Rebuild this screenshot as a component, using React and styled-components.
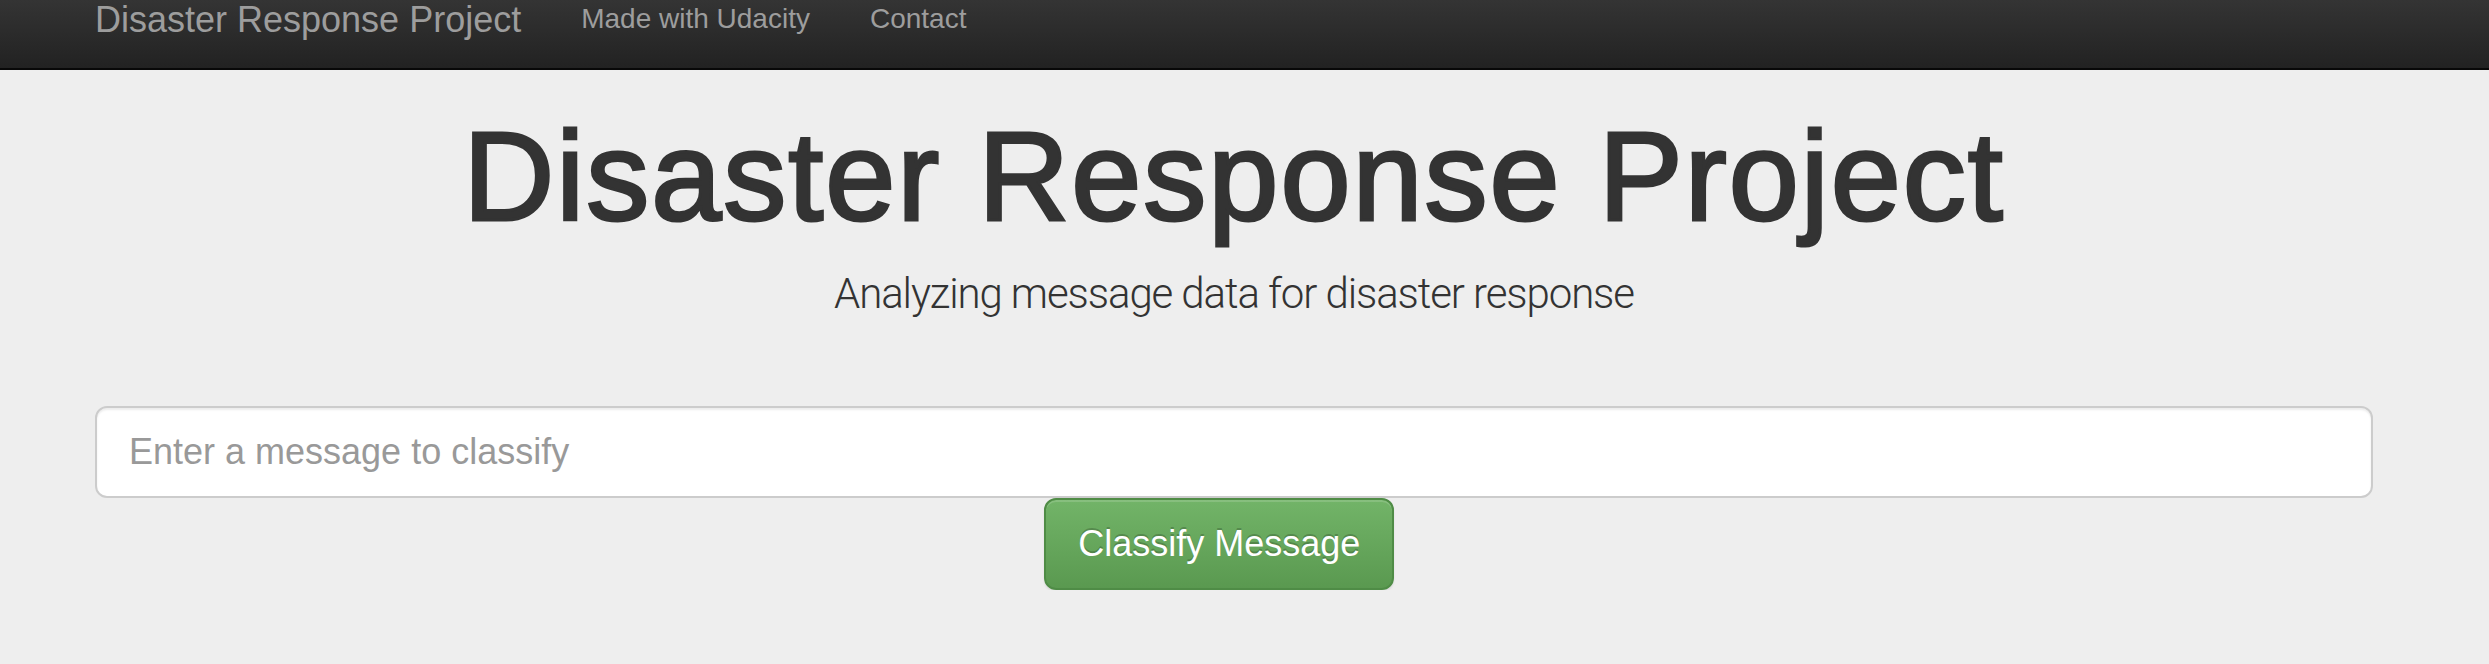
import React from "react";
import styled, { createGlobalStyle } from "styled-components";

const GlobalStyle = createGlobalStyle`
  html, body { margin: 0; padding: 0; }
  body {
    background: #eeeeee;
    font-family: "Liberation Sans", Arial, sans-serif;
    color: #333333;
  }
  * { box-sizing: border-box; }
`;

const Navbar = styled.nav`
  height: 70px;
  background: linear-gradient(to bottom, #343434 0%, #222222 100%);
  border-bottom: 2px solid #080808;
  display: flex;
  align-items: flex-start;
  padding-left: 65px;
`;

const Brand = styled.a`
  display: block;
  padding: 0 30px;
  font-size: 36px;
  line-height: 40px;
  color: #9d9d9d;
  text-decoration: none;
`;

const NavList = styled.ul`
  display: flex;
  list-style: none;
  margin: 0;
  padding: 0;
`;

const NavLink = styled.a`
  display: block;
  padding: 0 30px;
  font-size: 28px;
  line-height: 37px;
  color: #9d9d9d;
  text-decoration: none;
`;

const Container = styled.main`
  margin: 0 116px 0 95px;
`;

const Hero = styled.header`
  text-align: center;
  padding-top: 38px;
`;

const Title = styled.h1`
  margin: 0;
  font-family: "Liberation Sans", Arial, sans-serif;
  font-weight: 400;
  font-size: 126px;
  line-height: 1.1;
  letter-spacing: 2px;
  color: #333333;
  -webkit-text-stroke: 3px #333333;
`;

const Subtitle = styled.p`
  margin: 18px 0 0;
  font-family: Roboto, "Liberation Sans", sans-serif;
  font-weight: 300;
  font-size: 42px;
  line-height: 1.4;
  letter-spacing: -1.1px;
  color: #333333;
`;

const Form = styled.form`
  margin-top: 83px;
`;

const MessageInput = styled.input`
  display: block;
  width: 100%;
  height: 92px;
  padding: 20px 32px;
  font-family: "Liberation Sans", Arial, sans-serif;
  font-size: 36px;
  color: #555555;
  background: #ffffff;
  border: 2px solid #cccccc;
  border-radius: 12px;
  box-shadow: inset 0 2px 2px rgba(0, 0, 0, 0.075);
  outline: none;
  &::placeholder { color: #999999; }
`;

const ButtonRow = styled.div`
  margin-left: 41.6667%;
`;

const ClassifyButton = styled.button`
  display: inline-block;
  height: 92px;
  padding: 0 32px;
  font-family: "Liberation Sans", Arial, sans-serif;
  font-size: 36px;
  line-height: 48px;
  color: #ffffff;
  background: linear-gradient(to bottom, #72b468 0%, #5a9950 100%);
  border: 2px solid #4f8c46;
  border-radius: 12px;
  text-shadow: 0 -2px 0 rgba(0, 0, 0, 0.2);
  box-shadow: inset 0 2px 0 rgba(255, 255, 255, 0.15), 0 2px 2px rgba(0, 0, 0, 0.075);
  cursor: pointer;
`;

export default function App() {
  return (
    <>
      <GlobalStyle />
      <Navbar>
        <Brand href="#">Disaster Response Project</Brand>
        <NavList>
          <li><NavLink href="#">Made with Udacity</NavLink></li>
          <li><NavLink href="#">Contact</NavLink></li>
        </NavList>
      </Navbar>
      <Container>
        <Hero>
          <Title>Disaster Response Project</Title>
          <Subtitle>Analyzing message data for disaster response</Subtitle>
        </Hero>
        <Form onSubmit={(e) => e.preventDefault()}>
          <MessageInput type="text" placeholder="Enter a message to classify" />
          <ButtonRow>
            <ClassifyButton type="submit">Classify Message</ClassifyButton>
          </ButtonRow>
        </Form>
      </Container>
    </>
  );
}
